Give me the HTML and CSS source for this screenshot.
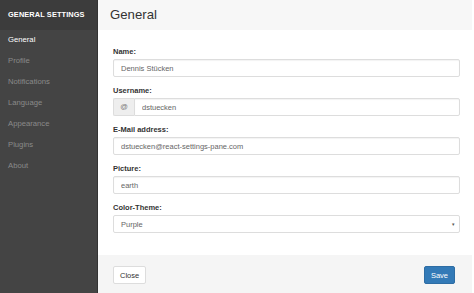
FILE: index.html
```html
<!DOCTYPE html>
<html lang="en">
<head>
    <meta charset="UTF-8">
    <meta name="viewport" content="width=device-width, initial-scale=1.0">
    <title>Settings</title>
    <link rel="stylesheet" href="styles.css">
</head>
<body>
    <div class="pane">
        <nav class="sidebar">
            <div class="sidebar-title">GENERAL SETTINGS</div>
            <ul class="menu">
                <li class="active">General</li>
                <li>Profile</li>
                <li>Notifications</li>
                <li>Language</li>
                <li>Appearance</li>
                <li>Plugins</li>
                <li>About</li>
            </ul>
        </nav>
        <div class="main">
            <div class="main-header">General</div>
            <form class="main-body">
                <div class="field">
                    <label>Name:</label>
                    <input type="text" class="control" value="Dennis Stücken">
                </div>
                <div class="field">
                    <label>Username:</label>
                    <div class="group">
                        <span class="addon">@</span>
                        <input type="text" class="control" value="dstuecken">
                    </div>
                </div>
                <div class="field">
                    <label>E-Mail address:</label>
                    <input type="text" class="control" value="dstuecken@react-settings-pane.com">
                </div>
                <div class="field">
                    <label>Picture:</label>
                    <input type="text" class="control" value="earth">
                </div>
                <div class="field">
                    <label>Color-Theme:</label>
                    <div class="select">
                        <span>Purple</span>
                        <span class="caret">&#9662;</span>
                    </div>
                </div>
            </form>
            <div class="main-footer">
                <button class="btn">Close</button>
                <button class="btn btn-primary">Save</button>
            </div>
        </div>
    </div>
</body>
</html>
```

FILE: styles.css
```css
body {
    margin: 0;
    background: #fff;
    font-family: "Liberation Sans", Arial, sans-serif;
    font-size: 7.5px;
    color: #333;
}

.pane {
    display: flex;
    width: 472px;
    height: 293px;
    overflow: hidden;
}

.sidebar {
    width: 97px;
    flex-shrink: 0;
    background: #444;
    border-right: 1px solid #333;
}

.sidebar-title {
    height: 30px;
    line-height: 30px;
    padding-left: 8px;
    background: #3c3c3c;
    color: #fff;
    font-weight: bold;
    font-size: 7.4px;
    letter-spacing: 0.1px;
}

.menu {
    list-style: none;
    margin: 0;
    padding: 0;
}

.menu li {
    height: 21px;
    line-height: 20px;
    padding-left: 8px;
    font-size: 7.7px;
    color: #8a8a8a;
}

.menu li.active {
    color: #fff;
}

.main {
    flex: 1;
    display: flex;
    flex-direction: column;
}

.main-header {
    height: 30px;
    line-height: 30px;
    padding-left: 12px;
    background: #f7f7f7;
    font-size: 13.2px;
    color: #333;
}

.main-body {
    flex: 1;
    margin: 0;
    padding: 17px 12px 0 15px;
}

.field {
    margin-bottom: 9px;
}

.field label {
    display: block;
    height: 10px;
    line-height: 10px;
    margin-bottom: 2px;
    font-weight: bold;
    color: #333;
}

.control {
    box-sizing: border-box;
    display: block;
    width: 100%;
    height: 18px;
    margin: 0;
    padding: 0 7px;
    border: 1px solid #ddd;
    border-radius: 2px;
    background: #fff;
    font-family: inherit;
    font-size: 7.5px;
    color: #666;
    box-shadow: inset 0 1px 1px rgba(0, 0, 0, 0.05);
}

.group {
    display: flex;
}

.addon {
    box-sizing: border-box;
    width: 21px;
    height: 18px;
    line-height: 16px;
    text-align: center;
    background: #eee;
    border: 1px solid #ddd;
    border-right: none;
    border-radius: 2px 0 0 2px;
    color: #777;
}

.group .control {
    flex: 1;
    border-radius: 0 2px 2px 0;
}

.select {
    box-sizing: border-box;
    display: flex;
    justify-content: space-between;
    align-items: center;
    height: 18px;
    padding: 0 4px 0 7px;
    border: 1px solid #ddd;
    border-radius: 2px;
    color: #666;
}

.caret {
    font-size: 5px;
    color: #555;
}

.main-footer {
    display: flex;
    justify-content: space-between;
    height: 38px;
    padding: 11px 17px 0 15px;
    box-sizing: border-box;
    background: #f5f5f5;
}

.btn {
    height: 18px;
    padding: 0 6px;
    border: 1px solid #ddd;
    border-radius: 2px;
    background: #fff;
    font-family: inherit;
    font-size: 7.5px;
    color: #333;
}

.btn-primary {
    background: #337ab7;
    border-color: #2e6da4;
    color: #fff;
}
```
